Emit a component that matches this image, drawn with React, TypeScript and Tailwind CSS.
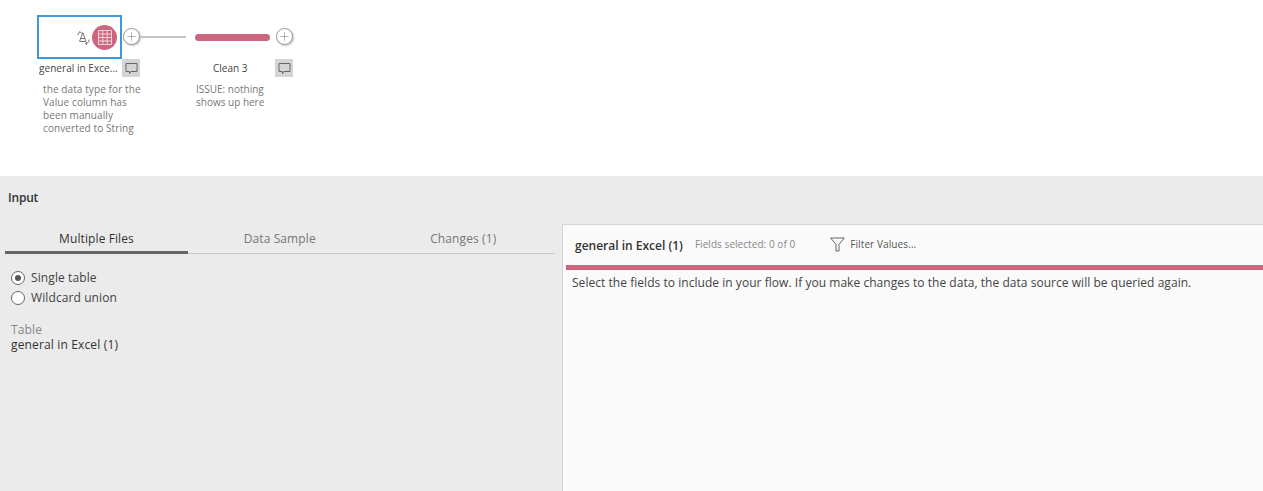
import { Plus } from "lucide-react";

const font = { fontFamily: '"Open Sans", "Noto Sans", sans-serif' };

function AddButton() {
  return (
    <div className="flex h-[17px] w-[17px] shrink-0 items-center justify-center rounded-full border border-[#999] bg-white shadow-[1px_1px_2px_rgba(0,0,0,0.25)]">
      <Plus className="h-[13px] w-[13px] text-[#777]" strokeWidth={1} />
    </div>
  );
}

function CommentButton() {
  return (
    <div className="flex h-[18px] w-[18px] shrink-0 items-center justify-center bg-[#d4d4d4]">
      <svg width="13" height="13" viewBox="0 0 13 13" fill="none" stroke="#666" strokeWidth="1">
        <path d="M1 1.5h11v8H6L4.5 11.5V9.5H1z" />
      </svg>
    </div>
  );
}

function InputNodeIcon() {
  return (
    <div className="flex h-[25px] w-[25px] items-center justify-center rounded-full bg-[#cc667f]">
      <svg width="14" height="15" viewBox="0 0 14 15" fill="none" stroke="#f3d3db" strokeWidth="1">
        <path d="M0.5 0.5h13v14h-13z" />
        <path d="M0.5 4h13M0.5 7.5h13M0.5 11h13M4.8 0.5v14M9.2 0.5v14" />
      </svg>
    </div>
  );
}

function TypeChangeIcon() {
  return (
    <svg width="13" height="15" viewBox="0 0 13 15" fill="none" stroke="#666" strokeWidth="0.9">
      {/* letter A with the two little convert arrows */}
      <path d="M2.5 11.5 5.8 2.5 9 11.5M3.6 8.5h4.3M2.8 11.5h6" />
      <path d="M0.8 5 2.8 1.5 4.6 3.5" />
      <path d="M12 9.5c0.2 2.5-1.2 3.8-3.4 4M10 12.2 8.4 13.6 10 15" />
    </svg>
  );
}

function FlowCanvas() {
  return (
    <div className="relative h-[176px] bg-white">
      {/* Input node */}
      <div className="absolute left-[37px] top-[15px] flex h-[44px] w-[85px] items-center justify-end gap-[2px] border-2 border-[#3b9ade] pr-[3px]">
        <TypeChangeIcon />
        <InputNodeIcon />
      </div>
      <div className="absolute left-[123px] top-[28px] flex items-center">
        <AddButton />
        <div className="h-[2px] w-[46px] bg-[#c4c4c4]" />
      </div>
      <div className="absolute left-[39px] top-[59px] flex items-center gap-[4px]">
        <span className="w-[79px] whitespace-nowrap text-[10px] tracking-[0.05px] text-[#444]">general in Exce...</span>
        <CommentButton />
      </div>
      <div className="absolute left-[43px] top-[83px] w-[105px] text-[10px] leading-[13px] tracking-[0.1px] text-[#777]">
        the data type for the
        <br />
        Value column has
        <br />
        been manually
        <br />
        converted to String
      </div>

      {/* Clean node */}
      <div className="absolute left-[195px] top-[34px] h-[7px] w-[75px] rounded-full bg-[#cc667f]" />
      <div className="absolute left-[276px] top-[28px]">
        <AddButton />
      </div>
      <div className="absolute left-[213px] top-[59px] flex h-[18px] items-center">
        <span className="whitespace-nowrap text-[10px] text-[#444]">Clean 3</span>
      </div>
      <div className="absolute left-[275px] top-[59px]">
        <CommentButton />
      </div>
      <div className="absolute left-[196px] top-[83px] w-[90px] text-[10px] leading-[13px] text-[#777]">
        ISSUE: nothing
        <br />
        shows up here
      </div>
    </div>
  );
}

function Tab({ label, active }: { label: string; active?: boolean }) {
  return (
    <div
      className={`h-[23px] text-center text-[12px] leading-[16px] tracking-[0.1px] ${
        active ? "border-b-[3px] border-[#666] text-[#333]" : "border-b border-[#c8c8c8] text-[#777]"
      }`}
    >
      {label}
    </div>
  );
}

function Radio({ label, checked }: { label: string; checked?: boolean }) {
  return (
    <div className="flex h-[20px] items-center gap-[6px]">
      <div className="flex h-[14px] w-[14px] items-center justify-center rounded-full border border-[#666] bg-white">
        {checked && <div className="h-[6px] w-[6px] rounded-full bg-[#555]" />}
      </div>
      <span className="text-[12px] tracking-[0.1px] text-[#444]">{label}</span>
    </div>
  );
}

function LeftPanel() {
  return (
    <div className="flex w-[562px] shrink-0 flex-col">
      <div className="pl-[8px] pt-[14px] text-[12px] font-semibold leading-[16px] tracking-[-0.2px] text-[#333]">Input</div>
      <div className="mt-[25px] flex items-end pl-[5px] pr-[7px]">
        <div className="w-[183px]">
          <Tab label="Multiple Files" active />
        </div>
        <div className="flex-1">
          <Tab label="Data Sample" />
        </div>
        <div className="flex-1">
          <Tab label="Changes (1)" />
        </div>
      </div>
      <div className="mt-[14px] pl-[11px]">
        <Radio label="Single table" checked />
        <Radio label="Wildcard union" />
      </div>
      <div className="mt-[14px] pl-[11px] text-[12px] leading-[15px] tracking-[0.15px]">
        <div className="text-[#888]">Table</div>
        <div className="text-[#333]">general in Excel (1)</div>
      </div>
    </div>
  );
}

function RightPanel() {
  return (
    <div className="mt-[48px] flex flex-1 flex-col border-l border-t border-[#d4d4d4] bg-[#fafafa]">
      <div className="flex h-[40px] items-center pl-[12px] pt-[2px]">
        <span className="text-[12px] font-semibold text-[#333]">general in Excel (1)</span>
        <span className="mb-[3px] ml-[12px] text-[10px] tracking-[0.05px] text-[#888]">Fields selected: 0 of 0</span>
        <svg className="mb-[3px] ml-[35px]" width="15" height="15" viewBox="0 0 15 15" fill="none" stroke="#555" strokeWidth="0.9">
          <path d="M0.7 1h13.6L9 7.5v6.5H6V7.5z" />
        </svg>
        <span className="mb-[3px] ml-[5px] text-[10px] tracking-[0.1px] text-[#555]">Filter Values...</span>
      </div>
      <div className="ml-[3px] h-[5px] bg-[#cc667f]" />
      <div className="ml-[9px] mt-[4px] text-[12px] leading-[18px] tracking-[0.04px] text-[#444]">
        Select the fields to include in your flow. If you make changes to the data, the data source will be queried again.
      </div>
    </div>
  );
}

export default function App() {
  return (
    <div className="flex h-[491px] w-[1263px] flex-col overflow-hidden" style={font}>
      <FlowCanvas />
      <div className="flex flex-1 bg-[#ebebeb]">
        <LeftPanel />
        <RightPanel />
      </div>
    </div>
  );
}
